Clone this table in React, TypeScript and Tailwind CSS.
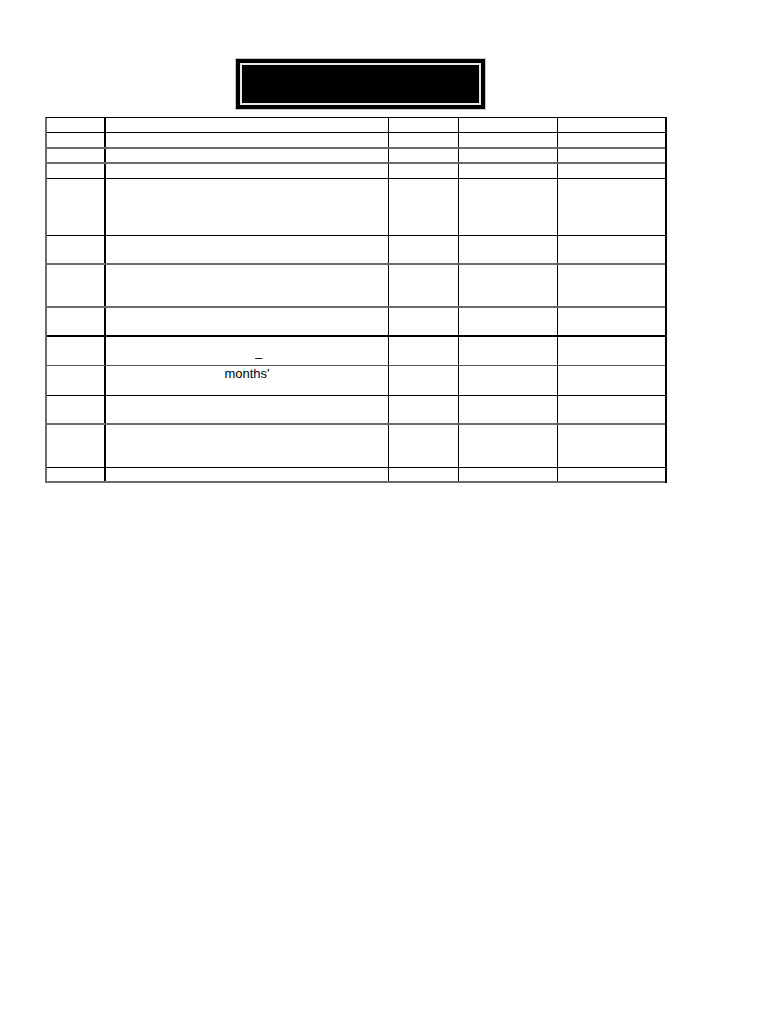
import React from "react"

const rows = [
  { h: "h-[15px]", b: "border-b border-b-black" },
  { h: "h-[16px]", b: "border-b-2 border-b-[#6b6b6b]" },
  { h: "h-[15px]", b: "border-b-2 border-b-[#6b6b6b]" },
  { h: "h-[15px]", b: "border-b border-b-black" },
  { h: "h-[57px]", b: "border-b border-b-black" },
  { h: "h-[29px]", b: "border-b-2 border-b-[#6b6b6b]" },
  { h: "h-[43px]", b: "border-b-2 border-b-[#6b6b6b]" },
  { h: "h-[29px]", b: "border-b-2 border-b-black" },
  { h: "h-[29px]", b: "border-b border-b-[#555]", text: "dash" },
  { h: "h-[30px]", b: "border-b border-b-black", text: "months" },
  { h: "h-[29px]", b: "border-b-2 border-b-[#6b6b6b]" },
  { h: "h-[43px]", b: "border-b border-b-black" },
  { h: "h-[15px]", b: "border-b-2 border-b-[#6b6b6b]" },
]

const colW = ["w-[59px]", "w-[283px]", "w-[70px]", "w-[99px]", "flex-1"]

export default function App() {
  return (
    <div className="min-h-[1024px] bg-white pt-[58px] pl-[45px] font-['Liberation_Sans',Arial,sans-serif] text-[13px] text-black">
      <div className="ml-[190px] h-[52px] w-[251px] border border-[#c4c4c4] bg-black p-[4px]">
        <div className="h-full w-full border-2 border-[#e8e8e8]" />
      </div>

      <div className="mt-[7px] w-[622px] border-t border-t-black border-l-2 border-l-[#6b6b6b] border-r-2 border-r-black">
        {rows.map((r, i) => (
          <div key={i} className={`flex ${r.h} ${r.b}`}>
            {colW.map((w, j) => (
              <div
                key={j}
                className={`${w} ${j < 4 ? "border-r border-r-black" : ""} ${j === 0 ? "border-r-2" : ""}`}
              >
                {j === 1 && r.text === "dash" && (
                  <div className="flex h-full items-end justify-center pl-[23px] leading-[15px]">–</div>
                )}
                {j === 1 && r.text === "months" && (
                  <div className="text-center leading-[15px]">months'</div>
                )}
              </div>
            ))}
          </div>
        ))}
      </div>
    </div>
  )
}
